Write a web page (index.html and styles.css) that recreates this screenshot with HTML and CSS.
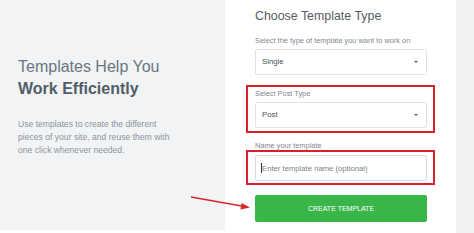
FILE: index.html
```html
<!DOCTYPE html>
<html>
<head>
    <title>New Template</title>
    <link rel="stylesheet" href="styles.css">
</head>
<body>
<div class="screen">
    <div class="intro">
        <h1 class="intro-title">Templates Help You <strong>Work Efficiently</strong></h1>
        <p class="intro-text">Use templates to create the different pieces of your site, and reuse them with one click whenever needed.</p>
    </div>

    <div class="form-panel">
        <h2 class="form-title">Choose Template Type</h2>

        <label class="field-label">Select the type of template you want to work on</label>
        <div class="select">Single<span class="caret"></span></div>

        <div class="highlight highlight-post">
            <label class="field-label">Select Post Type</label>
            <div class="select">Post<span class="caret"></span></div>
        </div>

        <label class="field-label field-label-name">Name your template</label>
        <div class="highlight highlight-name">
            <div class="input-wrap">
                <span class="text-cursor"></span>
                <input class="text-input" type="text" placeholder="Enter template name (optional)">
            </div>
        </div>

        <button class="create-button">CREATE TEMPLATE</button>
    </div>

    <div class="side-strip"></div>

    <!-- annotation arrow pointing at the button -->
    <svg class="arrow" width="474" height="233" viewBox="0 0 474 233">
        <line x1="191" y1="197" x2="243" y2="206.3" stroke="#d9262c" stroke-width="1.6"/>
        <polygon points="250,207.6 241.6,203 240.4,209.5" fill="#d9262c"/>
    </svg>
</div>
</body>
</html>
```

FILE: styles.css
```css
/* page shell */
body {
    margin: 0;
    background: #fff;
    font-family: "Liberation Sans", Arial, sans-serif;
}

.screen {
    position: relative;
    display: flex;
    width: 474px;
    height: 233px;
    overflow: hidden;
}

/* left intro panel */
.intro {
    width: 225px;
    height: 230px;
    box-sizing: border-box;
    padding: 56px 0 0 18px;
    background: #f1f3f5;
}

.intro-title {
    margin: 0;
    font-size: 16px;
    line-height: 22px;
    font-weight: normal;
    color: #6b7680;
}

.intro-title strong {
    display: block;
    color: #535d67;
}

.intro-text {
    width: 160px;
    margin: 18px 0 0;
    font-size: 8.6px;
    line-height: 13px;
    color: #8c959d;
}

/* form panel */
.form-panel {
    width: 231px;
    box-sizing: border-box;
    padding: 8px 29px 0 30px;
    background: #fff;
}

.form-title {
    margin: 0 0 12px;
    font-size: 12.4px;
    line-height: 16px;
    font-weight: normal;
    color: #555c63;
}

.field-label {
    display: block;
    margin-bottom: 3px;
    font-size: 7.4px;
    line-height: 10px;
    color: #80878e;
}

.select {
    position: relative;
    height: 26px;
    box-sizing: border-box;
    padding-left: 6px;
    border: 1px solid #dfe3e7;
    border-radius: 2px;
    font-size: 7.8px;
    line-height: 24px;
    color: #4a5057;
}

.caret {
    position: absolute;
    top: 11px;
    right: 8px;
    width: 0;
    height: 0;
    border-left: 2px solid transparent;
    border-right: 2px solid transparent;
    border-top: 2.5px solid #555;
}

/* red annotation boxes */
.highlight {
    margin: 10px -8px 0 -9px;
    border: 2px solid #d7202b;
}

.highlight-post {
    padding: 2px 6px 3px 7px;
}

.highlight-name {
    margin-top: 0;
    padding: 3px 6px 2px 7px;
}

.field-label-name {
    margin: 8px 0 0;
    line-height: 9px;
}

.input-wrap {
    position: relative;
}

.text-input {
    display: block;
    width: 100%;
    height: 26px;
    box-sizing: border-box;
    margin: 0;
    padding: 0 0 0 6px;
    border: 1px solid #d5dade;
    border-radius: 2px;
    font-family: "Liberation Sans", Arial, sans-serif;
    font-size: 7.7px;
    color: #444;
    outline: none;
}

.text-input::placeholder {
    color: #7b8289;
}

.text-cursor {
    position: absolute;
    top: 8px;
    left: 6px;
    width: 1px;
    height: 10px;
    background: #333;
}

.create-button {
    display: block;
    width: 100%;
    height: 27px;
    margin-top: 10px;
    padding: 0;
    border: none;
    border-radius: 2px;
    background: #39b54a;
    font-family: "Liberation Sans", Arial, sans-serif;
    font-size: 7px;
    color: #fff;
}

/* right edge */
.side-strip {
    flex: 1;
    background: #f1f2f4;
}

.arrow {
    position: absolute;
    top: 0;
    left: 0;
    pointer-events: none;
}
```
